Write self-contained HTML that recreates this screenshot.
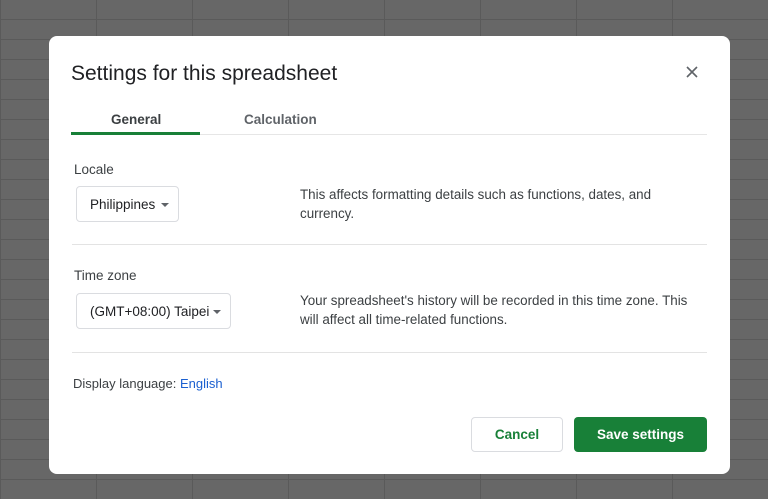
<!DOCTYPE html>
<html><head><meta charset="utf-8"><style>
*{box-sizing:border-box;margin:0;padding:0}
body{width:768px;height:499px;overflow:hidden;position:relative;font-family:"Liberation Sans",Arial,sans-serif;
background-color:#676767;
background-image:linear-gradient(to right,#5a5a5a 1px,transparent 1px),linear-gradient(to bottom,#5a5a5a 1px,transparent 1px);
background-size:96px 20px;background-position:0px 0px,0 19px;}
.dlg{position:absolute;left:49px;top:36px;width:681px;height:438px;background:#fff;border-radius:8px;}
.t{position:absolute;left:22px;top:26px;font-size:21px;color:#202124}
.x{position:absolute;left:633px;top:26px;width:20px;height:20px}
.tabs{position:absolute;left:22px;top:98px;width:636px;height:1px;background:#e6e6e6}
.tab{position:absolute;top:76px;font-size:13.5px;font-weight:bold}
.ul{position:absolute;left:22px;top:96px;width:129px;height:3px;background:#188038}
.lbl{position:absolute;left:25px;font-size:13.5px;color:#3c4043}
.sel{position:absolute;left:27px;height:36px;border:1px solid #dadce0;border-radius:4px;font-size:13.5px;color:#202124;padding:10px 0 0 13px}
.sel:after{content:"";position:absolute;right:9px;top:16px;border:4px solid transparent;border-top:4px solid #5f6368;border-bottom:0}
.d{position:absolute;left:251px;font-size:13.4px;color:#3c4043;line-height:18.5px}
.hr{position:absolute;left:23px;width:635px;height:1px;background:#e3e3e3}
.btn{position:absolute;top:381px;height:35px;border-radius:4px;font-size:13.5px;font-weight:bold;text-align:center;line-height:33px}
</style></head><body>
<div class="dlg">
<div class="t">Settings for this spreadsheet</div>
<svg class="x" viewBox="0 0 20 20"><path d="M5 5L15 15M15 5L5 15" stroke="#5f6368" stroke-width="1.6"/></svg>
<div class="tabs"></div>
<div class="tab" style="left:62px;color:#3c4043">General</div>
<div class="tab" style="left:195px;color:#5f6368">Calculation</div>
<div class="ul"></div>
<div class="lbl" style="top:126px">Locale</div>
<div class="sel" style="top:150px;width:103px">Philippines</div>
<div class="d" style="top:150px">This affects formatting details such as functions, dates, and<br>currency.</div>
<div class="hr" style="top:208px"></div>
<div class="lbl" style="top:232px">Time zone</div>
<div class="sel" style="top:257px;width:155px">(GMT+08:00) Taipei</div>
<div class="d" style="top:256px">Your spreadsheet's history will be recorded in this time zone. This<br>will affect all time-related functions.</div>
<div class="hr" style="top:316px"></div>
<div class="lbl" style="top:340px;left:24px;font-size:13px">Display language: <span style="color:#1a5fd0">English</span></div>
<div class="btn" style="left:422px;width:92px;border:1px solid #dadce0;color:#188038">Cancel</div>
<div class="btn" style="left:525px;width:133px;background:#188038;color:#fff;line-height:35px">Save settings</div>
</div>
</body></html>
